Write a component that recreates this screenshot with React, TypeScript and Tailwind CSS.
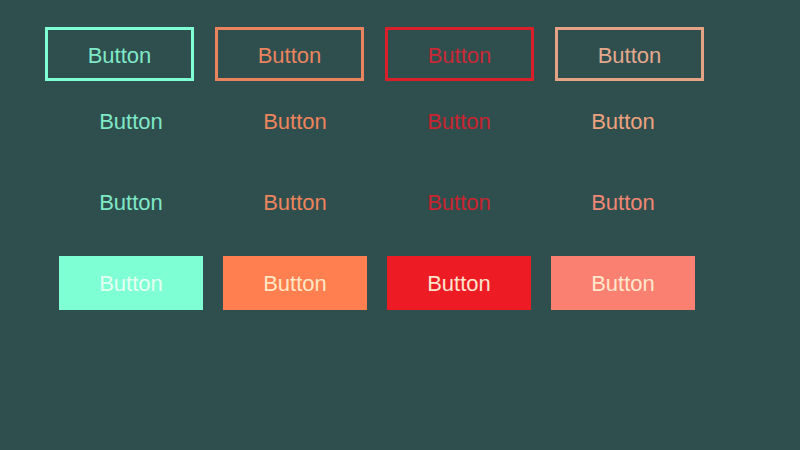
import React from "react";

const font = { fontFamily: '"Liberation Sans", Arial, sans-serif' };

export default function App() {
  return (
    <div
      className="w-[800px] h-[450px] bg-[#2f4f4f] overflow-hidden flex flex-col text-[22px] leading-none"
      style={font}
    >
      <div className="flex gap-[21px] pl-[45px] pt-[27px]">
        <div className="w-[149px] h-[54px] pt-[3px] border-[3px] border-[#7fffd4] text-[#7fe8c6] flex items-center justify-center">Button</div>
        <div className="w-[149px] h-[54px] pt-[3px] border-[3px] border-[#e9845e] text-[#e9845e] flex items-center justify-center">Button</div>
        <div className="w-[149px] h-[54px] pt-[3px] border-[3px] border-[#d91f2a] text-[#c92836] flex items-center justify-center">Button</div>
        <div className="w-[149px] h-[54px] pt-[3px] border-[3px] border-[#e4a384] text-[#e4a88c] flex items-center justify-center">Button</div>
      </div>
      <div className="flex gap-[20px] pl-[59px] mt-[13px]">
        <div className="w-[144px] h-[54px] pt-[2px] text-[#7fe8c6] flex items-center justify-center">Button</div>
        <div className="w-[144px] h-[54px] pt-[2px] text-[#ec845c] flex items-center justify-center">Button</div>
        <div className="w-[144px] h-[54px] pt-[2px] text-[#c9242f] flex items-center justify-center">Button</div>
        <div className="w-[144px] h-[54px] pt-[2px] text-[#eca27f] flex items-center justify-center">Button</div>
      </div>
      <div className="flex gap-[20px] pl-[59px] mt-[27px]">
        <div className="w-[144px] h-[54px] pt-[2px] text-[#7fe8c6] flex items-center justify-center">Button</div>
        <div className="w-[144px] h-[54px] pt-[2px] text-[#ec845c] flex items-center justify-center">Button</div>
        <div className="w-[144px] h-[54px] pt-[2px] text-[#c9242f] flex items-center justify-center">Button</div>
        <div className="w-[144px] h-[54px] pt-[2px] text-[#f08774] flex items-center justify-center">Button</div>
      </div>
      <div className="flex gap-[20px] pl-[59px] mt-[27px]">
        <div className="w-[144px] h-[54px] pt-[2px] bg-[#7fffd4] text-[#e3fff2] flex items-center justify-center">Button</div>
        <div className="w-[144px] h-[54px] pt-[2px] bg-[#ff7f50] text-[#ffe6c4] flex items-center justify-center">Button</div>
        <div className="w-[144px] h-[54px] pt-[2px] bg-[#ed1c24] text-[#fde2cc] flex items-center justify-center">Button</div>
        <div className="w-[144px] h-[54px] pt-[2px] bg-[#fa8072] text-[#ffe6cc] flex items-center justify-center">Button</div>
      </div>
    </div>
  );
}
